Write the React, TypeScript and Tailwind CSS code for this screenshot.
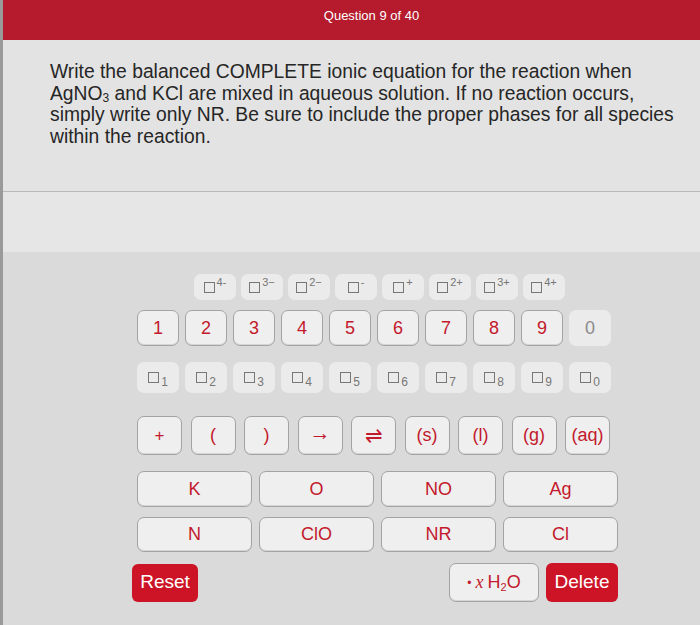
import React from 'react';

const sup = ['4-', '3\u2212', '2\u2212', '-', '+', '2+', '3+', '4+'];
const digits = ['1', '2', '3', '4', '5', '6', '7', '8', '9'];
const subs = ['1', '2', '3', '4', '5', '6', '7', '8', '9', '0'];
const symbols = ['+', '(', ')', '\u2192', '\u21CC', '(s)', '(l)', '(g)', '(aq)'];
const rowA = ['K', 'O', 'NO', 'Ag'];
const rowB = ['N', 'ClO', 'NR', 'Cl'];

const Box = () => (
  <span className="inline-block w-[11px] h-[11px] border border-[#777]" />
);

const keyClass =
  'flex items-center justify-center rounded-[7px] border border-[#a3a3a3] bg-[#efefef] text-[#c3192d] shadow-[inset_0_-1px_0_#d6d6d6]';

export default function App() {
  return (
    <div className="w-[700px] h-[625px] overflow-hidden bg-[#dadada] border-l-[3px] border-[#9a9a9a] text-[#222]" style={{ fontFamily: '"Liberation Sans", Arial, sans-serif' }}>
      <div className="h-[40px] bg-[#b51b2d] flex justify-center pl-[40px] pt-[6px]">
        <span className="text-white text-[13px]">Question 9 of 40</span>
      </div>

      <div className="bg-[#e3e3e3] pl-[47px] pt-[21px] h-[152px] border-b border-[#b9b9b9]">
        <p className="text-[19.3px] leading-[21.7px] text-[#262626] whitespace-nowrap">
          Write the balanced COMPLETE ionic equation for the reaction when
          <br />
          AgNO<span className="text-[12px] leading-none relative top-[2px]">3</span> and KCl are mixed in aqueous solution. If no reaction occurs,
          <br />
          simply write only NR. Be sure to include the proper phases for all species
          <br />
          within the reaction.
        </p>
      </div>

      <div className="h-[60px] bg-[#e6e6e6]" />

      <div className="pl-[134px] w-[615px] pt-[22px] flex flex-col">
        <div className="flex justify-center gap-[5px] pl-[4px]">
          {sup.map(s => (
            <div key={s} className="w-[42px] h-[26px] rounded-[7px] bg-[#ebebeb] flex items-center justify-center text-[#777]">
              <Box />
              <span className="text-[11px] leading-none ml-[2px] -mt-[9px]">{s}</span>
            </div>
          ))}
        </div>

        <div className="flex gap-[6px] mt-[10px]">
          {digits.map(d => (
            <div key={d} className={keyClass + ' w-[42px] h-[36px] text-[18px]'}>{d}</div>
          ))}
          <div className="w-[42px] h-[36px] rounded-[7px] bg-[#ebebeb] flex items-center justify-center text-[18px] text-[#8a8a8a]">0</div>
        </div>

        <div className="flex gap-[6px] mt-[16px]">
          {subs.map(s => (
            <div key={s} className="w-[42px] h-[31px] rounded-[7px] bg-[#ebebeb] flex items-center justify-center text-[#777]">
              <Box />
              <span className="text-[12px] leading-none ml-[2px] mt-[9px]">{s}</span>
            </div>
          ))}
        </div>

        <div className="flex gap-[8.5px] mt-[23px]">
          {symbols.map(s => (
            <div key={s} className={keyClass + ' w-[45px] h-[39px] ' + (s === '\u2192' || s === '\u21CC' ? 'text-[21px]' : s === '+' ? 'text-[17px]' : 'text-[18px]')}>
              <span className={s === '\u2192' ? 'relative -top-[3px]' : ''}>{s}</span>
            </div>
          ))}
        </div>

        <div className="grid grid-cols-4 gap-[7px] mt-[16px]">
          {rowA.map(s => (
            <div key={s} className={keyClass + ' h-[36px] text-[18px]'}>{s}</div>
          ))}
        </div>
        <div className="grid grid-cols-4 gap-[7px] mt-[10px]">
          {rowB.map(s => (
            <div key={s} className={keyClass + ' h-[35px] text-[18px]'}>{s}</div>
          ))}
        </div>

        <div className="flex items-center mt-[11px] -ml-[5px]">
          <div className="w-[66px] h-[38px] rounded-[6px] bg-[#cc1426] text-white text-[19px] flex items-center justify-center">Reset</div>
          <div className="flex-1" />
          <div className={keyClass + ' w-[90px] h-[39px] text-[18px] gap-[4px]'}>
            <span className="text-[12px]">{'\u2022'}</span>
            <span className="italic" style={{ fontFamily: '"Liberation Serif", serif' }}>x</span>
            <span>H<span className="text-[11px] leading-none relative top-[3px]">2</span>O</span>
          </div>
          <div className="w-[72px] h-[39px] ml-[7px] rounded-[6px] bg-[#cc1426] text-white text-[19px] flex items-center justify-center">Delete</div>
        </div>
      </div>
    </div>
  );
}
